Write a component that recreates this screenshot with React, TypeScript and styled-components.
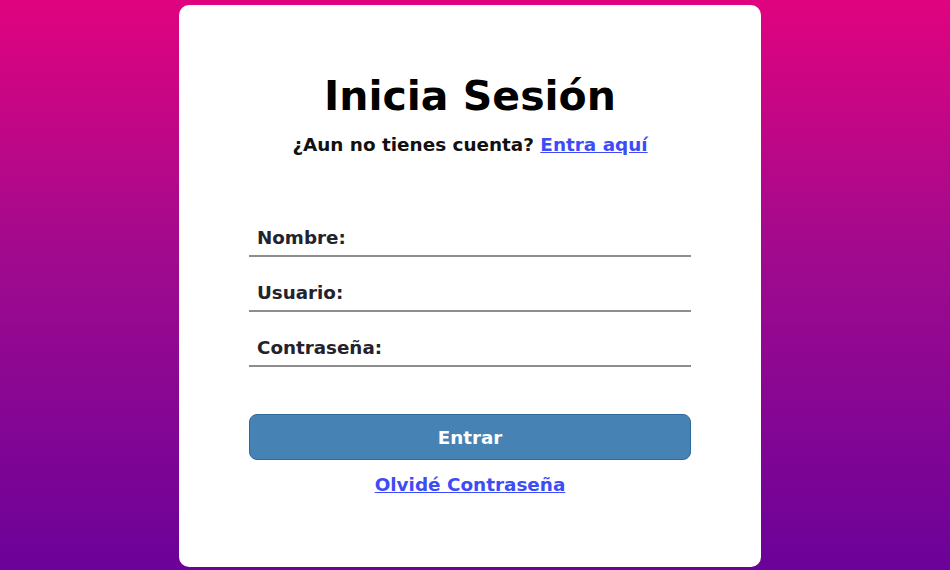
import styled, { createGlobalStyle } from "styled-components";

const GlobalStyle = createGlobalStyle`
  html, body {
    margin: 0;
    padding: 0;
  }
  body {
    font-family: "DejaVu Sans", Roboto, "Liberation Sans", sans-serif;
  }
`;

const Page = styled.div`
  min-height: 570px;
  box-sizing: border-box;
  padding: 5px 10px 3px 0;
  display: flex;
  justify-content: center;
  align-items: flex-start;
  background: linear-gradient(to bottom, #e0037f 0%, #a00a8e 45%, #6b0299 100%);
`;

const Card = styled.div`
  width: 582px;
  height: 562px;
  box-sizing: border-box;
  background: #ffffff;
  border-radius: 10px;
  padding: 67px 70px 0;
  display: flex;
  flex-direction: column;
  align-items: stretch;
`;

const Title = styled.h1`
  margin: 0;
  font-size: 41px;
  line-height: 48px;
  font-weight: 700;
  color: #000;
  text-align: center;
`;

const Subtitle = styled.p`
  margin: 15px 0 0;
  font-size: 18.4px;
  line-height: 20px;
  font-weight: 700;
  color: #111;
  text-align: center;
`;

const Link = styled.a`
  color: #3d4cf6;
  text-decoration: underline;
  font-weight: 700;
  cursor: pointer;
`;

const Form = styled.form`
  margin-top: 64px;
  display: flex;
  flex-direction: column;
  gap: 17px;
`;

const Field = styled.input`
  height: 38px;
  box-sizing: border-box;
  border: none;
  border-bottom: 2px solid #8d8d8d;
  padding: 0 8px;
  font-family: inherit;
  font-size: 18.3px;
  font-weight: 700;
  color: #222;
  outline: none;
  background: transparent;

  &::placeholder {
    color: #23232e;
    opacity: 1;
  }
`;

const Submit = styled.button`
  margin-top: 30px;
  height: 46px;
  border: 1px solid #2f6a9c;
  border-radius: 8px;
  background: #4682b4;
  color: #fff;
  font-family: inherit;
  font-size: 18.3px;
  font-weight: 700;
  cursor: pointer;
`;

const Forgot = styled.div`
  margin-top: 15px;
  font-size: 18.4px;
  line-height: 20px;
  text-align: center;
`;

export default function App() {
  return (
    <>
      <GlobalStyle />
      <Page>
        <Card>
          <Title>Inicia Sesión</Title>
          <Subtitle>
            ¿Aun no tienes cuenta? <Link>Entra aquí</Link>
          </Subtitle>
          <Form onSubmit={(e) => e.preventDefault()}>
            <Field placeholder="Nombre:" />
            <Field placeholder="Usuario:" />
            <Field type="password" placeholder="Contraseña:" />
            <Submit type="submit">Entrar</Submit>
          </Form>
          <Forgot>
            <Link>Olvidé Contraseña</Link>
          </Forgot>
        </Card>
      </Page>
    </>
  );
}
